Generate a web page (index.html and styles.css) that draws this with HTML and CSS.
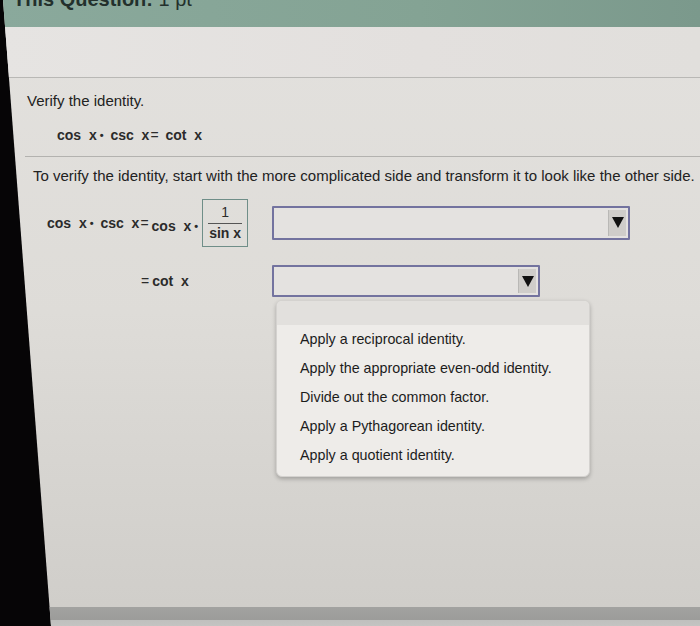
FILE: index.html
```html
<!DOCTYPE html>
<html>
<head>
<meta charset="utf-8">
<link rel="stylesheet" href="styles.css">
</head>
<body>
<div class="screen">
  <div class="topbar"><div class="qtitle"><b>This Question:</b> 1 pt</div></div>
  <div class="subbar"></div>
  <div class="content">
    <div class="prompt">Verify the identity.</div>
    <div class="eq eq-main">cos&nbsp; x<span class="dot">•</span> csc&nbsp; x<span class="eqs">=</span> cot&nbsp; x</div>
    <div class="rule"></div>
    <div class="instructions">To verify the identity, start with the more complicated side and transform it to look like the other side.</div>
    <div class="step step1">
      <div class="lhs">
        <span class="eq">cos&nbsp; x<span class="dot">•</span> csc&nbsp; x<span class="eqs">=</span></span>
        <span class="eq low">cos&nbsp; x<span class="dot">•</span></span>
        <span class="frac"><span class="num">1</span><span class="den">sin x</span></span>
      </div>
      <div class="select wide"><span class="arrow"></span></div>
    </div>
    <div class="step step2">
      <div class="lhs lhs2"><span class="eq"><span class="eqs">=</span>cot&nbsp; x</span></div>
      <div class="select narrow"><span class="arrow"></span></div>
    </div>
    <div class="menu">
      <div class="menu-blank"></div>
      <div class="opt">Apply a reciprocal identity.</div>
      <div class="opt">Apply the appropriate even-odd identity.</div>
      <div class="opt">Divide out the common factor.</div>
      <div class="opt">Apply a Pythagorean identity.</div>
      <div class="opt">Apply a quotient identity.</div>
    </div>
  </div>
  <div class="bottomband"></div>
</div>
</body>
</html>
```

FILE: styles.css
```css
html, body {
  margin: 0;
  padding: 0;
  background: #060506;
  width: 700px;
  height: 626px;
  overflow: hidden;
}
.screen {
  width: 700px;
  height: 626px;
  display: flex;
  flex-direction: column;
  clip-path: polygon(3px 0, 100% 0, 100% 100%, 51px 100%);
  background: linear-gradient(180deg, #e3e1de 0%, #dedcd8 50%, #cfcdc9 100%);
  font-family: "Liberation Sans", Arial, sans-serif;
  color: #1e1e1e;
}
.topbar {
  height: 27px;
  background: linear-gradient(90deg, #8aa99c 0%, #84a394 60%, #7b998c 100%);
  overflow: hidden;
  flex: none;
}
.qtitle {
  margin-top: -11px;
  padding-left: 13px;
  font-size: 20px;
  line-height: 20px;
  color: #23302c;
}
.qtitle b { font-weight: bold; }
.subbar {
  height: 50px;
  flex: none;
  background: linear-gradient(90deg, #e6e4e2 0%, #e3e0de 60%, #e1dfdc 100%);
  border-bottom: 1px solid #b9b8b5;
}
.content {
  flex: 1;
  display: flex;
  flex-direction: column;
  padding-left: 25px;
}
.prompt {
  margin-top: 14px;
  padding-left: 2px;
  font-size: 15px;
  line-height: 18px;
  color: #222;
}
.eq {
  font-size: 14px;
  font-weight: bold;
  color: #2b2b2b;
}
.eq .dot {
  font-size: 11px;
  margin: 0 3px 0 3px;
  position: relative;
  top: -1px;
}
.eq .eqs {
  font-weight: normal;
  margin: 0 3px 0 1px;
}
.eq-main {
  margin-top: 17px;
  padding-left: 32px;
  line-height: 16px;
}
.rule {
  margin-top: 12px;
  height: 1px;
  background: #b3b2af;
}
.instructions {
  margin-top: 10px;
  padding-left: 8px;
  font-size: 15px;
  line-height: 18px;
  white-space: nowrap;
  color: #222;
}
.step {
  display: flex;
  align-items: center;
}
.step1 {
  margin-top: 14px;
}
.lhs {
  width: 247px;
  display: flex;
  align-items: center;
  padding-left: 22px;
  box-sizing: border-box;
}
.lhs .low {
  margin-top: 6px;
}
.frac {
  margin-left: 1px;
  width: 44px;
  height: 46px;
  border: 1px solid #6f8e88;
  display: flex;
  flex-direction: column;
  align-items: center;
  justify-content: center;
  font-size: 14px;
  color: #2b2b2b;
}
.frac .num {
  width: 34px;
  text-align: center;
  border-bottom: 1px solid #555;
  line-height: 17px;
  padding-bottom: 2px;
}
.frac .den {
  line-height: 18px;
  font-weight: bold;
}
.select {
  box-sizing: border-box;
  border: 2px solid #73739f;
  border-radius: 1px;
  background: #e4e2e0;
  display: flex;
  justify-content: flex-end;
  align-items: stretch;
  padding: 2px;
}
.select.wide {
  width: 358px;
  height: 34px;
}
.select.narrow {
  width: 268px;
  height: 32px;
}
.arrow {
  width: 17px;
  background: #cfcdca;
  border-left: 1px solid #b9b8b6;
  position: relative;
}
.arrow::after {
  content: "";
  position: absolute;
  left: 3px;
  top: 7px;
  border-left: 6px solid transparent;
  border-right: 6px solid transparent;
  border-top: 11px solid #111;
}
.step2 {
  margin-top: 18px;
}
.lhs2 {
  padding-left: 115px;
}
.menu {
  margin-top: 3px;
  margin-left: 251px;
  width: 314px;
  height: 177px;
  box-sizing: border-box;
  background: #eeece9;
  border: 1px solid #d4d2cf;
  border-radius: 6px;
  box-shadow: 0 2px 4px rgba(0,0,0,0.25);
  overflow: hidden;
}
.menu-blank {
  height: 24px;
  background: #e2e0dd;
}
.opt {
  padding-left: 23px;
  font-size: 14.3px;
  line-height: 29px;
  height: 29px;
  color: #1c1c1c;
}
.bottomband {
  flex: none;
  height: 19px;
  background: linear-gradient(180deg, #a2a2a0 0%, #9c9c9a 70%, #c0c0be 71%, #c4c4c2 100%);
}
```
